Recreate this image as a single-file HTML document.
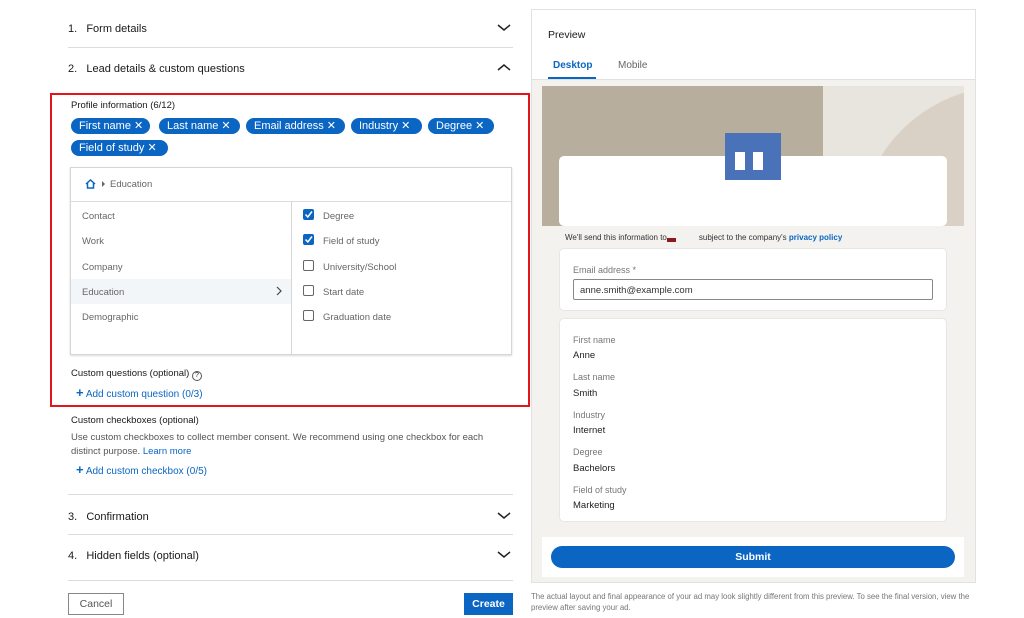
<!DOCTYPE html>
<html><head><meta charset="utf-8"><style>
*{box-sizing:border-box;margin:0;padding:0}
body{width:1024px;height:618px;background:#fff;font-family:"Liberation Sans",sans-serif;position:relative;overflow:hidden;color:#191919}
.a{position:absolute;white-space:nowrap}
.sec{font-size:11px;color:#191919}
.hr{position:absolute;height:1px;background:#dcdcdc}
.chip{position:absolute;height:16px;border-radius:8px;background:#0a66c2;color:#fff;font-size:11px;line-height:16px;padding-left:8px}
.g{color:#666;font-size:9.5px}
.cb{position:absolute;width:11px;height:11px;border:1px solid #666;border-radius:2px}
.cb.on{background:#0a66c2;border-color:#0a66c2}
.lbl{font-size:9px;color:#777}
.val{font-size:9.5px;color:#222}
.blue{color:#0a66c2}
</style></head><body>
<div class="a sec" style="left:68px;top:23px">1.&nbsp;&nbsp;&nbsp;Form details</div>
<svg class="a" style="left:497px;top:24px" width="14" height="8"><path d="M1 1 L7 6 L13 1" stroke="#222" stroke-width="1.5" fill="none"/></svg>
<div class="hr" style="left:68px;top:47px;width:445px"></div>
<div class="a sec" style="left:68px;top:63px">2.&nbsp;&nbsp;&nbsp;Lead details &amp; custom questions</div>
<svg class="a" style="left:497px;top:63px" width="14" height="8"><path d="M1 7 L7 2 L13 7" stroke="#222" stroke-width="1.5" fill="none"/></svg>

<div class="a" style="left:50px;top:93px;width:480px;height:314px;border:2px solid #e4141b"></div>
<div class="a" style="left:71px;top:100px;font-size:9.5px">Profile information (6/12)</div>
<div class="chip" style="left:71px;top:118px;width:79px">First name ✕</div>
<div class="chip" style="left:159px;top:118px;width:81px">Last name ✕</div>
<div class="chip" style="left:246px;top:118px;width:99px">Email address ✕</div>
<div class="chip" style="left:351px;top:118px;width:71px">Industry ✕</div>
<div class="chip" style="left:428px;top:118px;width:66px">Degree ✕</div>
<div class="chip" style="left:71px;top:140px;width:97px">Field of study ✕</div>

<div class="a" style="left:70px;top:167px;width:442px;height:188px;border:1px solid #d6d6d6;box-shadow:0 1px 2px rgba(0,0,0,.15)"></div>
<div class="hr" style="left:71px;top:201px;width:440px"></div>
<div class="a" style="left:291px;top:202px;width:1px;height:152px;background:#d6d6d6"></div>
<svg class="a" style="left:85px;top:179px" width="11" height="10"><path d="M1 5 L5.5 1 L10 5 M2.5 4 V9 H8.5 V4" stroke="#0a66c2" stroke-width="1.5" fill="none"/></svg>
<div class="a" style="left:102px;top:181px;width:0;height:0;border-left:3px solid #666;border-top:3px solid transparent;border-bottom:3px solid transparent"></div>
<div class="a g" style="left:110px;top:179px">Education</div>
<div class="a" style="left:71px;top:279px;width:220px;height:25px;background:#f3f6f8"></div>
<div class="a g" style="left:82px;top:211px">Contact</div>
<div class="a g" style="left:82px;top:236px">Work</div>
<div class="a g" style="left:82px;top:262px">Company</div>
<div class="a g" style="left:82px;top:287px">Education</div>
<div class="a g" style="left:82px;top:312px">Demographic</div>
<svg class="a" style="left:276px;top:286px" width="6" height="10"><path d="M1 1 L5 5 L1 9" stroke="#444" stroke-width="1.2" fill="none"/></svg>
<div class="cb on" style="left:303px;top:209px"><svg width="11" height="11" style="position:absolute;left:-1px;top:-1px"><path d="M2.5 5.5 L4.8 8 L9 2.5" stroke="#fff" stroke-width="1.5" fill="none"/></svg></div>
<div class="cb on" style="left:303px;top:234px"><svg width="11" height="11" style="position:absolute;left:-1px;top:-1px"><path d="M2.5 5.5 L4.8 8 L9 2.5" stroke="#fff" stroke-width="1.5" fill="none"/></svg></div>
<div class="cb" style="left:303px;top:260px"></div>
<div class="cb" style="left:303px;top:285px"></div>
<div class="cb" style="left:303px;top:310px"></div>
<div class="a g" style="left:323px;top:211px">Degree</div>
<div class="a g" style="left:323px;top:236px">Field of study</div>
<div class="a g" style="left:323px;top:262px">University/School</div>
<div class="a g" style="left:323px;top:287px">Start date</div>
<div class="a g" style="left:323px;top:312px">Graduation date</div>

<div class="a" style="left:71px;top:368px;font-size:9.5px">Custom questions (optional) <span style="display:inline-block;width:10px;height:10px;border:1px solid #555;border-radius:50%;font-size:7px;text-align:center;line-height:8px;vertical-align:-1px">?</span></div>
<div class="a blue" style="left:76px;top:388px;font-size:10px"><b style="font-size:13px;line-height:10px">+</b> Add custom question (0/3)</div>

<div class="a" style="left:71px;top:415px;font-size:9.5px">Custom checkboxes (optional)</div>
<div class="a" style="left:71px;top:431px;font-size:9.5px;color:#555;line-height:14px;white-space:normal;width:440px">Use custom checkboxes to collect member consent. We recommend using one checkbox for each distinct purpose. <span class="blue">Learn more</span></div>
<div class="a blue" style="left:76px;top:465px;font-size:10px"><b style="font-size:13px;line-height:10px">+</b> Add custom checkbox (0/5)</div>
<div class="hr" style="left:68px;top:494px;width:445px"></div>
<div class="a sec" style="left:68px;top:511px">3.&nbsp;&nbsp;&nbsp;Confirmation</div>
<svg class="a" style="left:497px;top:512px" width="14" height="8"><path d="M1 1 L7 6 L13 1" stroke="#222" stroke-width="1.5" fill="none"/></svg>
<div class="hr" style="left:68px;top:534px;width:445px"></div>
<div class="a sec" style="left:68px;top:550px">4.&nbsp;&nbsp;&nbsp;Hidden fields (optional)</div>
<svg class="a" style="left:497px;top:551px" width="14" height="8"><path d="M1 1 L7 6 L13 1" stroke="#222" stroke-width="1.5" fill="none"/></svg>
<div class="hr" style="left:68px;top:580px;width:445px"></div>
<div class="a" style="left:68px;top:593px;width:56px;height:22px;border:1px solid #888;font-size:10.5px;color:#555;text-align:center;line-height:20px">Cancel</div>
<div class="a" style="left:464px;top:593px;width:49px;height:22px;background:#0a66c2;color:#fff;font-size:10.5px;font-weight:bold;text-align:center;line-height:22px">Create</div>

<div class="a" style="left:531px;top:9px;width:445px;height:574px;border:1px solid #e2e2e2;background:#f3f2ef"></div>
<div class="a" style="left:532px;top:10px;width:443px;height:70px;background:#fff;border-bottom:1px solid #e0e0e0"></div>
<div class="a" style="left:548px;top:29px;font-size:10.5px">Preview</div>
<div class="a" style="left:553px;top:60px;font-size:10px;color:#0a66c2;font-weight:bold">Desktop</div>
<div class="a" style="left:548px;top:77px;width:48px;height:2px;background:#0a66c2"></div>
<div class="a" style="left:618px;top:60px;font-size:10px;color:#666">Mobile</div>

<div class="a" style="left:542px;top:86px;width:422px;height:140px;background:#e8e4de;overflow:hidden">
 <div style="position:absolute;left:0;top:0;width:281px;height:140px;background:#b8ae9e"></div>
 <div style="position:absolute;left:316px;top:0;width:300px;height:300px;border-radius:50%;background:#d9d1c5"></div>
</div>
<div class="a" style="left:559px;top:156px;width:388px;height:70px;background:#fff;border-radius:5px"></div>
<div class="a" style="left:725px;top:133px;width:56px;height:47px;background:#4a72b8"></div>
<div class="a" style="left:735px;top:152px;width:10px;height:18px;background:#fff"></div>
<div class="a" style="left:753px;top:152px;width:10px;height:18px;background:#fff"></div>
<div class="a" style="left:565px;top:233px;font-size:8px;color:#333">We'll send this information to<span style="display:inline-block;width:9px;height:4px;background:#8b1a1a;vertical-align:-2px"></span><span style="display:inline-block;width:23px"></span>subject to the company's <b class="blue">privacy policy</b></div>

<div class="a" style="left:559px;top:248px;width:388px;height:63px;background:#fff;border-radius:5px;border:1px solid #e6e6e6"></div>
<div class="a lbl" style="left:573px;top:265px">Email address *</div>
<div class="a" style="left:573px;top:279px;width:360px;height:21px;border:1px solid #888;border-radius:2px;font-size:9.5px;padding:5px 6px;color:#333">anne.smith@example.com</div>

<div class="a" style="left:559px;top:318px;width:388px;height:204px;background:#fff;border-radius:5px;border:1px solid #e6e6e6"></div>
<div class="a lbl" style="left:573px;top:335px">First name</div><div class="a val" style="left:573px;top:350px">Anne</div>
<div class="a lbl" style="left:573px;top:372px">Last name</div><div class="a val" style="left:573px;top:388px">Smith</div>
<div class="a lbl" style="left:573px;top:410px">Industry</div><div class="a val" style="left:573px;top:425px">Internet</div>
<div class="a lbl" style="left:573px;top:447px">Degree</div><div class="a val" style="left:573px;top:463px">Bachelors</div>
<div class="a lbl" style="left:573px;top:485px">Field of study</div><div class="a val" style="left:573px;top:500px">Marketing</div>

<div class="a" style="left:542px;top:537px;width:422px;height:40px;background:#fff"></div>
<div class="a" style="left:551px;top:546px;width:404px;height:22px;background:#0a66c2;border-radius:11px;color:#fff;font-weight:bold;font-size:10.5px;text-align:center;line-height:22px">Submit</div>
<div class="a" style="left:531px;top:591px;font-size:7.8px;color:#777;line-height:11px;white-space:normal;width:450px">The actual layout and final appearance of your ad may look slightly different from this preview. To see the final version, view the preview after saving your ad.</div>
</body></html>
